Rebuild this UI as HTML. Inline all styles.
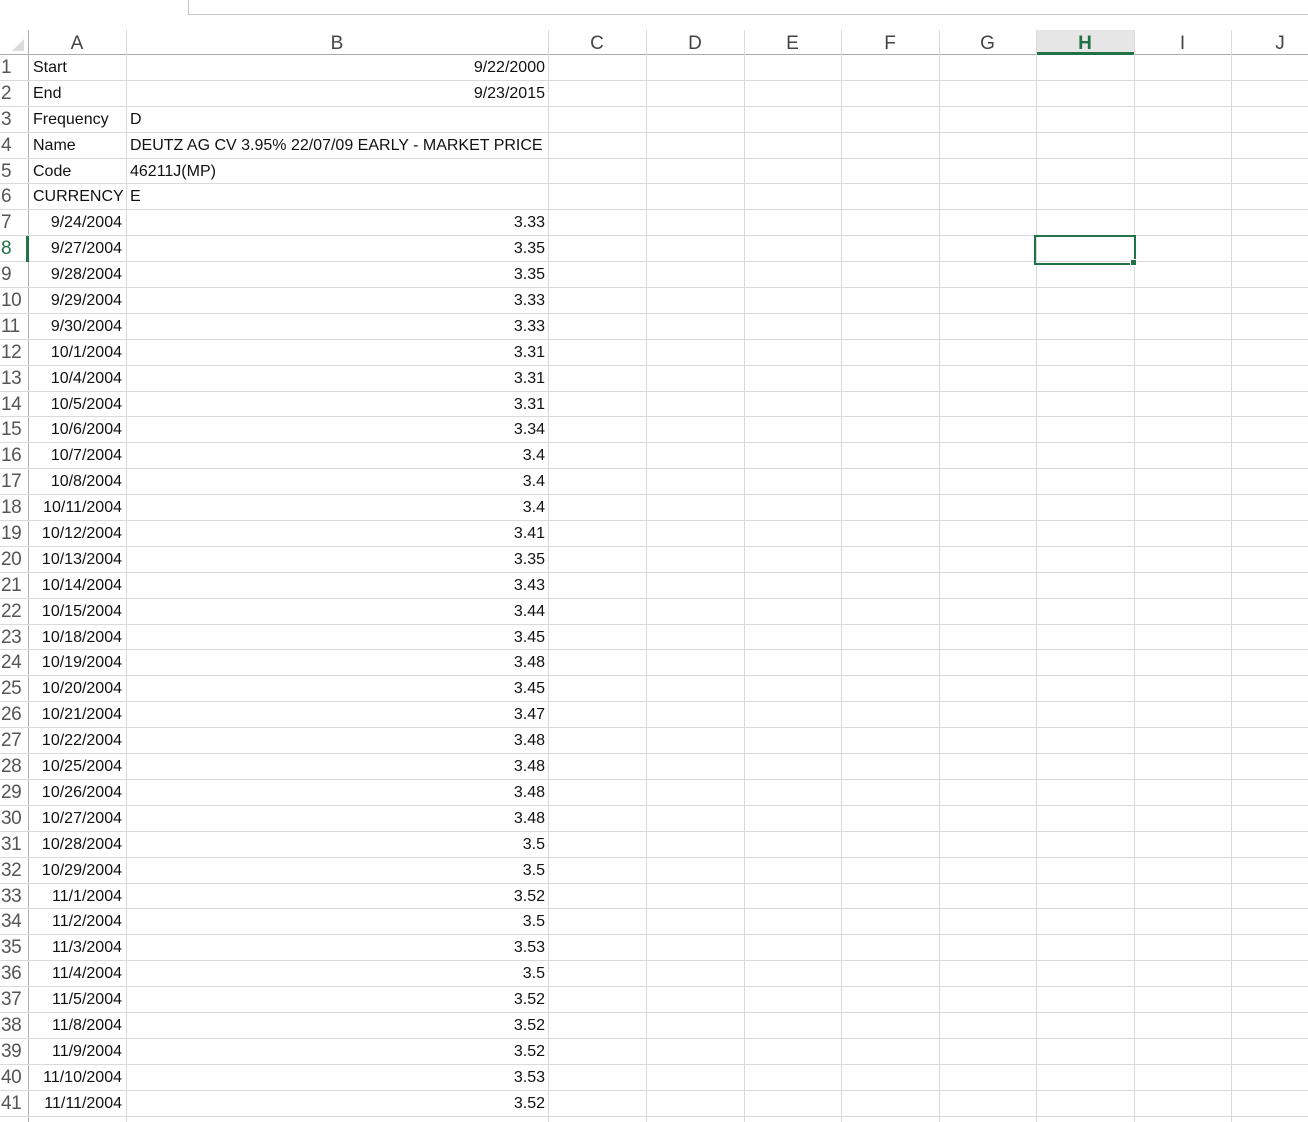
<!DOCTYPE html>
<html><head><meta charset="utf-8"><style>
*{margin:0;padding:0;box-sizing:border-box}
body{width:1308px;height:1122px;overflow:hidden;background:#fff;font-family:"Liberation Sans",Arial,sans-serif;position:relative}
.fb{position:absolute;left:188px;top:-2px;width:1200px;height:17px;border:1px solid #c6c6c6}
.hdr{position:absolute;top:30px;left:0;height:25px;width:1308px;border-bottom:1px solid #ababab}
.hdr span{position:absolute;top:3px;font-size:19px;color:#444;text-align:center}
.vl{position:absolute;top:30px;bottom:0;width:1px;background:#dadada}
.rows{position:absolute;top:55px;left:0;width:1308px}
.r{height:25.9px;border-bottom:1px solid #dadada;position:relative;font-size:16px;color:#111}
.r .n{position:absolute;left:1px;top:2px;font-size:19px;color:#555;width:26px;letter-spacing:-0.5px}
.r .a{position:absolute;left:33px;top:4px}
.r .ar{position:absolute;right:1186px;top:4px}
.r .b{position:absolute;left:130px;top:4px;white-space:nowrap}
.r .br{position:absolute;right:763px;top:4px}
</style></head><body>
<div class="fb"></div>
<div class="hdr">
<div style="position:absolute;left:0;top:0;width:28px;height:25px"><div style="position:absolute;right:4px;bottom:4px;width:0;height:0;border-left:12px solid transparent;border-bottom:12px solid #dcdcdc"></div></div>
<div style="position:absolute;left:1036px;top:0;width:98px;height:25px;background:#e6e6e6;border-bottom:3px solid #217346"></div>
<span style="left:28px;width:98px">A</span>
<span style="left:126px;width:422px">B</span>
<span style="left:548px;width:98px">C</span>
<span style="left:646px;width:98px">D</span>
<span style="left:744px;width:97px">E</span>
<span style="left:841px;width:98px">F</span>
<span style="left:939px;width:97px">G</span>
<span style="left:1036px;width:98px;color:#217346;font-weight:bold">H</span>
<span style="left:1134px;width:97px">I</span>
<span style="left:1231px;width:98px">J</span>
</div>
<div class="vl" style="left:28px;background:#b0b0b0"></div>
<div class="vl" style="left:126px"></div>
<div class="vl" style="left:548px"></div>
<div class="vl" style="left:646px"></div>
<div class="vl" style="left:744px"></div>
<div class="vl" style="left:841px"></div>
<div class="vl" style="left:939px"></div>
<div class="vl" style="left:1036px"></div>
<div class="vl" style="left:1134px"></div>
<div class="vl" style="left:1231px"></div>
<div class="rows">
<div class="r"><span class="n">1</span><span class="a">Start</span><span class="br">9/22/2000</span></div>
<div class="r"><span class="n">2</span><span class="a">End</span><span class="br">9/23/2015</span></div>
<div class="r"><span class="n">3</span><span class="a">Frequency</span><span class="b">D</span></div>
<div class="r"><span class="n">4</span><span class="a">Name</span><span class="b">DEUTZ AG CV 3.95% 22/07/09 EARLY - MARKET PRICE</span></div>
<div class="r"><span class="n">5</span><span class="a">Code</span><span class="b">46211J(MP)</span></div>
<div class="r"><span class="n">6</span><span class="a">CURRENCY</span><span class="b">E</span></div>
<div class="r"><span class="n">7</span><span class="ar">9/24/2004</span><span class="br">3.33</span></div>
<div class="r"><span class="n" style="color:#217346">8</span><div style="position:absolute;left:26px;top:0;width:3px;height:26px;background:#217346"></div><span class="ar">9/27/2004</span><span class="br">3.35</span></div>
<div class="r"><span class="n">9</span><span class="ar">9/28/2004</span><span class="br">3.35</span></div>
<div class="r"><span class="n">10</span><span class="ar">9/29/2004</span><span class="br">3.33</span></div>
<div class="r"><span class="n">11</span><span class="ar">9/30/2004</span><span class="br">3.33</span></div>
<div class="r"><span class="n">12</span><span class="ar">10/1/2004</span><span class="br">3.31</span></div>
<div class="r"><span class="n">13</span><span class="ar">10/4/2004</span><span class="br">3.31</span></div>
<div class="r"><span class="n">14</span><span class="ar">10/5/2004</span><span class="br">3.31</span></div>
<div class="r"><span class="n">15</span><span class="ar">10/6/2004</span><span class="br">3.34</span></div>
<div class="r"><span class="n">16</span><span class="ar">10/7/2004</span><span class="br">3.4</span></div>
<div class="r"><span class="n">17</span><span class="ar">10/8/2004</span><span class="br">3.4</span></div>
<div class="r"><span class="n">18</span><span class="ar">10/11/2004</span><span class="br">3.4</span></div>
<div class="r"><span class="n">19</span><span class="ar">10/12/2004</span><span class="br">3.41</span></div>
<div class="r"><span class="n">20</span><span class="ar">10/13/2004</span><span class="br">3.35</span></div>
<div class="r"><span class="n">21</span><span class="ar">10/14/2004</span><span class="br">3.43</span></div>
<div class="r"><span class="n">22</span><span class="ar">10/15/2004</span><span class="br">3.44</span></div>
<div class="r"><span class="n">23</span><span class="ar">10/18/2004</span><span class="br">3.45</span></div>
<div class="r"><span class="n">24</span><span class="ar">10/19/2004</span><span class="br">3.48</span></div>
<div class="r"><span class="n">25</span><span class="ar">10/20/2004</span><span class="br">3.45</span></div>
<div class="r"><span class="n">26</span><span class="ar">10/21/2004</span><span class="br">3.47</span></div>
<div class="r"><span class="n">27</span><span class="ar">10/22/2004</span><span class="br">3.48</span></div>
<div class="r"><span class="n">28</span><span class="ar">10/25/2004</span><span class="br">3.48</span></div>
<div class="r"><span class="n">29</span><span class="ar">10/26/2004</span><span class="br">3.48</span></div>
<div class="r"><span class="n">30</span><span class="ar">10/27/2004</span><span class="br">3.48</span></div>
<div class="r"><span class="n">31</span><span class="ar">10/28/2004</span><span class="br">3.5</span></div>
<div class="r"><span class="n">32</span><span class="ar">10/29/2004</span><span class="br">3.5</span></div>
<div class="r"><span class="n">33</span><span class="ar">11/1/2004</span><span class="br">3.52</span></div>
<div class="r"><span class="n">34</span><span class="ar">11/2/2004</span><span class="br">3.5</span></div>
<div class="r"><span class="n">35</span><span class="ar">11/3/2004</span><span class="br">3.53</span></div>
<div class="r"><span class="n">36</span><span class="ar">11/4/2004</span><span class="br">3.5</span></div>
<div class="r"><span class="n">37</span><span class="ar">11/5/2004</span><span class="br">3.52</span></div>
<div class="r"><span class="n">38</span><span class="ar">11/8/2004</span><span class="br">3.52</span></div>
<div class="r"><span class="n">39</span><span class="ar">11/9/2004</span><span class="br">3.52</span></div>
<div class="r"><span class="n">40</span><span class="ar">11/10/2004</span><span class="br">3.53</span></div>
<div class="r"><span class="n">41</span><span class="ar">11/11/2004</span><span class="br">3.52</span></div>
</div>
<div style="position:absolute;left:1034px;top:235px;width:102px;height:30px;border:2px solid #217346"></div>
<div style="position:absolute;left:1130px;top:259px;width:7px;height:7px;background:#217346;border:1px solid #fff"></div>
</body></html>
